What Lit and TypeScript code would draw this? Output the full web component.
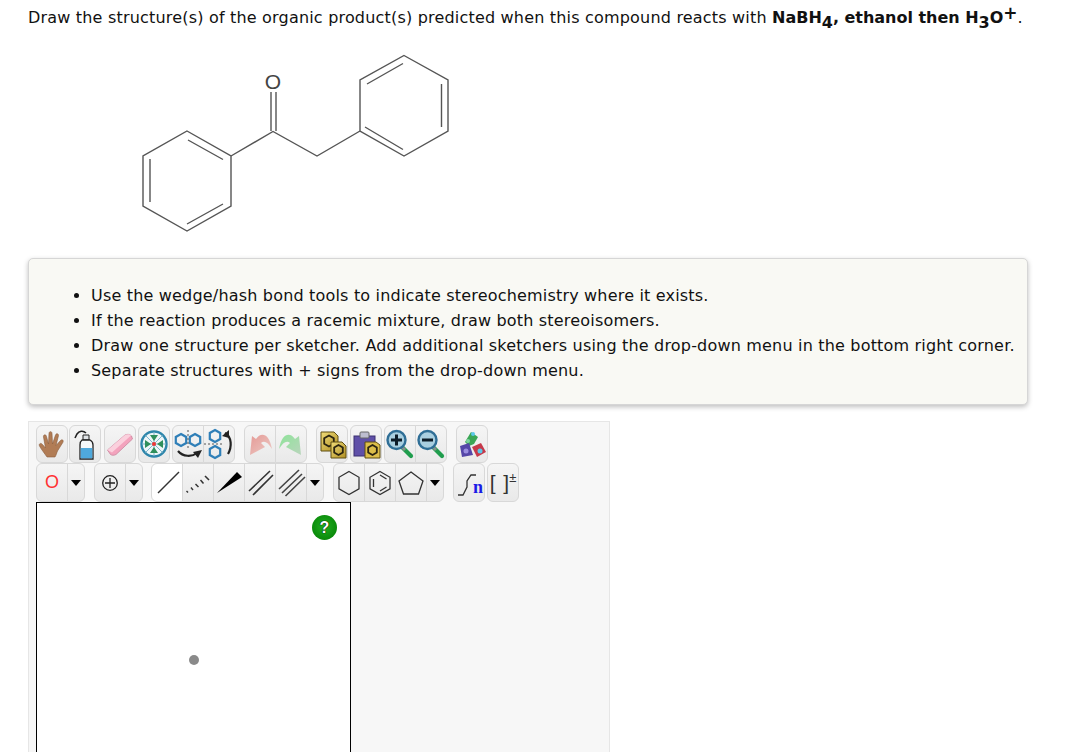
import { LitElement, html, css, svg } from "lit";
import { customElement } from "lit/decorators.js";

const hex = (cx: number, cy: number, r: number) => {
  const p: string[] = [];
  for (let i = 0; i < 6; i++) {
    const a = (Math.PI / 3) * i - Math.PI / 2;
    p.push(`${(cx + r * Math.cos(a)).toFixed(1)},${(cy + r * Math.sin(a)).toFixed(1)}`);
  }
  return p.join(" ");
};

const lens = (plus: boolean) => svg`<svg width="30" height="34" viewBox="0 0 30 34">
  <path d="M17 20 L26 29" stroke="#1f9d4d" stroke-width="4.200" stroke-linecap="round"/>
  <path d="M16.500 19.500 L20 23" stroke="#8a8f8f" stroke-width="3"/>
  <circle cx="11.500" cy="13" r="9" fill="#a9cfe0" stroke="#2f6e96" stroke-width="2.400"/>
  <path d="M6 13 H17 ${plus ? "M11.500 7.500 V18.500" : ""}" stroke="#0c1c28" stroke-width="3"/>
</svg>`;

const I = {
  hand: svg`<svg width="30" height="34" viewBox="0 0 30 34"><path d="M10 30 C8 27 4 22 2.500 19 C1.500 16.500 4 15.500 5.500 17.500 L8.500 21 L6.500 10 C6 7.500 9 7 9.500 9.500 L11.500 17 L12 6.500 C12 4 15 4 15 6.500 L15.500 17 L18.500 8 C19.300 5.800 22 6.600 21.400 9 L19 18.500 L23.500 13.500 C25.300 11.800 27 13.500 25.800 15.500 L20.500 24 C19.500 26.500 19 28.500 18 30 Z" fill="#b17c55" stroke="#8a5c3c" stroke-width=".6"/></svg>`,
  bottle: svg`<svg width="30" height="34" viewBox="0 0 30 34"><path d="M5 11 L7 7 C9 4 13 3 16 6" fill="none" stroke="#222" stroke-width="1.600"/><path d="M13 8 H19 V13 H13 Z" fill="#dfe3e6" stroke="#222"/><path d="M12 13 H20 C22 14 23 16 23 18 V32 H10 V18 C10 16 10.500 14 12 13 Z" fill="#f6f9fb" stroke="#222" stroke-width="1.300"/><path d="M10.700 21 H22.300 V31.300 H10.700 Z" fill="#4fa9dc"/></svg>`,
  eraser: svg`<svg width="30" height="34" viewBox="0 0 30 34"><path d="M2.500 23 L20 8 C22 7 25 7 26.500 9 L27.500 12 L11 27.500 C9 28.500 7 28.500 5.500 27.500 Z" fill="#f3a3bd" stroke="#c9859d" stroke-width=".8"/><path d="M2.500 23 L20 8 C22 7 25 7 26 8.500 L7 25.500 Z" fill="#fbd0dd"/></svg>`,
  clean: svg`<svg width="30" height="34" viewBox="0 0 30 34"><circle cx="15" cy="17" r="12.500" fill="#eef6f8" stroke="#2e86ab" stroke-width="2.400"/><g stroke="#7fb6cc" stroke-width="1"><path d="M15 5 V29 M3 17 H27 M6.500 8.500 L23.500 25.500 M23.500 8.500 L6.500 25.500"/></g><g fill="#2f8f5b"><path d="M15 14 L11 8 H19 Z M15 20 L11 26 H19 Z M12 17 L6 13 V21 Z M18 17 L24 13 V21 Z"/></g><circle cx="15" cy="17" r="2" fill="#e33"/></svg>`,
  flipH: svg`<svg width="30" height="34" viewBox="0 0 30 34"><g fill="none" stroke="#2f7fb8" stroke-width="2.200"><polygon points="${hex(8, 13, 6)}"/><polygon points="${hex(22, 13, 6)}"/></g><path d="M15 3 V22" stroke="#555" stroke-dasharray="2 2"/><path d="M5 24 C10 30 19 30 24 26" fill="none" stroke="#222" stroke-width="2.200"/><path d="M29 23 L25 31 L20 25 Z" fill="#222"/></svg>`,
  flipV: svg`<svg width="30" height="34" viewBox="0 0 30 34"><g fill="none" stroke="#2f7fb8" stroke-width="2.200"><polygon points="${hex(11, 9, 6)}"/><polygon points="${hex(11, 25, 6)}"/></g><path d="M0 17 H20" stroke="#555" stroke-dasharray="2 2"/><path d="M21 6 C28 10 28 20 24 27" fill="none" stroke="#222" stroke-width="2.200"/><path d="M18 9 L25 3 L25 11 Z" fill="#222"/></svg>`,
  undo: svg`<svg width="30" height="34" viewBox="0 0 30 34"><defs><linearGradient id="u" x1="0" y1="0" x2="1" y2="1"><stop offset="0" stop-color="#e59a96"/><stop offset="1" stop-color="#eccac5"/></linearGradient></defs><path d="M5 28 L7 9 L11 12 C16 5 24 6 27 22 C23 15 19 13 16 16 L20 20 Z" fill="url(#u)"/></svg>`,
  redo: svg`<svg width="30" height="34" viewBox="0 0 30 34"><defs><linearGradient id="r" x1="0" y1="0" x2="1" y2="1"><stop offset="0" stop-color="#8fe39a"/><stop offset="1" stop-color="#b9d5bc"/></linearGradient></defs><path d="M25 28 L23 9 L19 12 C14 5 6 6 3 22 C7 15 11 13 14 16 L10 20 Z" fill="url(#r)"/></svg>`,
  copy: svg`<svg width="30" height="34" viewBox="0 0 30 34"><defs><linearGradient id="g" x1="0" y1="0" x2="1" y2="1"><stop offset="0" stop-color="#f0dc78"/><stop offset="1" stop-color="#b08f24"/></linearGradient></defs><path d="M4 5 H17 L21 9 V24 H4 Z" fill="url(#g)" stroke="#5f4e12"/><polygon points="${hex(12, 14, 5.500)}" fill="none" stroke="#2b2410" stroke-width="1.800"/><path d="M14 15 H25 L29 19 V31 H14 Z" fill="url(#g)" stroke="#5f4e12"/><polygon points="${hex(21.500, 23, 5)}" fill="none" stroke="#2b2410" stroke-width="1.800"/></svg>`,
  paste: svg`<svg width="30" height="34" viewBox="0 0 30 34"><rect x="3" y="9" width="21" height="20" fill="#5f50a8" stroke="#3b2f70"/><rect x="9" y="5" width="9" height="6" rx="1" fill="#bdbdcf" stroke="#666"/><path d="M14 15 H25 L29 18 V31 H14 Z" fill="#dcbe4a" stroke="#5f4e12"/><polygon points="${hex(21.500, 23, 5)}" fill="none" stroke="#2b2410" stroke-width="1.800"/></svg>`,
  zoomIn: lens(true),
  zoomOut: lens(false),
  atoms: svg`<svg width="30" height="34" viewBox="0 0 30 34"><path d="M8 15 L14 5 L21 10 L17 17 L12 19 Z" fill="#3aa655"/><polygon points="3,19 12,16 16,28 5,30" fill="#5546a8"/><polygon points="15,20 24,16 29,25 20,30" fill="#c5394a"/><circle cx="16" cy="7" r="2" fill="#5bc8e8"/><circle cx="11" cy="14" r="2" fill="#7fd4a0"/><circle cx="23" cy="24" r="2.500" fill="#5bc8e8"/><circle cx="9" cy="24" r="2.500" fill="#9a8ee0"/></svg>`,
  caret: svg`<svg width="10" height="6" viewBox="0 0 10 6"><path d="M0 0 H10 L5 6 Z" fill="#000"/></svg>`,
  plus: svg`<svg width="18" height="18" viewBox="0 0 18 18"><circle cx="9" cy="9" r="7.300" fill="none" stroke="#222" stroke-width="1.300"/><path d="M4 9 H14 M9 4 V14" stroke="#222" stroke-width="1.300"/></svg>`,
  single: svg`<svg width="30" height="30" viewBox="0 0 30 30"><path d="M6 25 L27 4" stroke="#333" stroke-width="1.500"/></svg>`,
  hash: svg`<svg width="30" height="30" viewBox="0 0 30 30"><g stroke="#333"><path d="M3.500 23 L5 24.500" stroke-width="1.400"/><path d="M8 19.500 L10 22" stroke-width="1.400"/><path d="M12.500 16 L15.500 19" stroke-width="1.500"/><path d="M17.500 12 L20.500 15.500" stroke-width="1.500"/><path d="M22 8 L26 12" stroke-width="1.600"/></g></svg>`,
  wedge: svg`<svg width="30" height="30" viewBox="0 0 30 30"><polygon points="3,25 23,4 28,9" fill="#000"/></svg>`,
  dbl: svg`<svg width="30" height="30" viewBox="0 0 30 30"><path d="M4 23 L25 3 M8 27 L28 7" stroke="#333" stroke-width="1.600"/></svg>`,
  tri: svg`<svg width="30" height="30" viewBox="0 0 30 30"><path d="M3 21 L23 2 M6 25 L26 6 M9.500 28 L29 9" stroke="#444" stroke-width="1.600"/></svg>`,
  hexa: svg`<svg width="26" height="26" viewBox="0 0 26 26"><polygon points="${hex(13, 13, 11.500)}" fill="none" stroke="#333" stroke-width="1.300"/></svg>`,
  benz: svg`<svg width="26" height="26" viewBox="0 0 26 26"><polygon points="${hex(13, 13, 11.500)}" fill="none" stroke="#333" stroke-width="1.300"/><path d="M13 5 L19.500 9 M19.500 17 L13 21 M6.500 17 V9" stroke="#333" stroke-width="1.300" fill="none"/></svg>`,
  penta: svg`<svg width="26" height="26" viewBox="0 0 26 26"><polygon points="13,2 25,11 20.500,24 5.500,24 1,11" fill="none" stroke="#333" stroke-width="1.300"/></svg>`,
  sgroup: svg`<svg width="30" height="30" viewBox="0 0 30 30"><path d="M3 27 H8 L12 19 V13 L16 7 H21" fill="none" stroke="#333" stroke-width="1.300"/></svg>`,
};

const Molecule = svg`<svg class="mol" width="480" height="190" viewBox="28 52 480 190">
  <g fill="none" stroke="#555" stroke-width="1.400">
    <polygon points="404,55.500 448,80 448,131 404,156 360,131 360,80"/>
    <path d="M367 84 L403 63.500 M441.500 84 V127 M365 127 L403 149.500"/>
    <polygon points="187,131 231,156 231,206 187,231 143,206 143,156"/>
    <path d="M188 140 L223 159.500 M150 159 V202 M187 224 L223 204"/>
    <path d="M231 156 L273 131.500 L317 156 L360 131 M271 92 V131 M276 92 V131"/>
    <text x="273" y="89" fill="#444" stroke="none" font-family="Liberation Sans, sans-serif" font-size="21" text-anchor="middle">O</text>
  </g>
</svg>`;

@customElement("app-root")
export class AppRoot extends LitElement {
  static styles = css`
    :host { display: block; font-family: "DejaVu Sans", Verdana, sans-serif; color: #111; height: 752px; overflow: hidden; background: #fff; }
    .page { padding: 9px 39px 0 28px; }
    .q { margin: 0; font-size: 16px; letter-spacing: .19px; line-height: 18px; white-space: nowrap; }
    .q b { font-weight: 700; letter-spacing: -.02px; }
    .q sub { font-size: 16px; line-height: 0; vertical-align: -5px; }
    .q sup { font-size: 17px; line-height: 0; vertical-align: 4px; }
    .mol { display: block; margin: 25px 0 0 0; }
    .note { box-sizing: border-box; margin-top: 16px; width: 1000px; height: 147px; background: #f9f9f4; border: 1px solid #d6d6d6; border-radius: 5px; box-shadow: 0 2px 5px rgba(0,0,0,.25); padding: 24px 0 0 0; font-size: 16px; letter-spacing: .185px; }
    .note ul { margin: 0; padding: 0 0 0 62px; }
    .note li { height: 25px; line-height: 25px; white-space: nowrap; }
    .panel { box-sizing: border-box; margin-top: 16px; width: 582px; height: 340px; background: #f7f7f7; border: 1px solid #e6e6e6; padding: 3px 0 0 7px; }
    .row { display: flex; height: 38px; }
    .row + .row { height: 39px; }
    .btn { box-sizing: border-box; flex: none; width: 32px; display: flex; align-items: center; justify-content: center; background: linear-gradient(#f5f5f5, #e9e9e9); border: 1px solid #d8d8d8; border-radius: 6px; overflow: hidden; }
    .row:first-child .btn svg { filter: blur(.35px); }
    .grp { display: flex; flex: none; }
    .grp .btn { border-radius: 0; margin-left: -1px; }
    .grp .btn:first-child { border-radius: 6px 0 0 6px; margin-left: 0; }
    .grp .btn:last-child { border-radius: 0 6px 6px 0; }
    .btn.sel { background: #fff; }
    .btn.car { width: 18px; }
    .o { color: #f33; font: 18px "Liberation Sans", sans-serif; }
    .n { color: #1a1ae6; font: bold 18px "Liberation Serif", serif; margin: 10px 0 0 -12px; }
    .br { font: 21px "Liberation Sans", sans-serif; color: #333; letter-spacing: 1px; }
    .pm { font: 13px "Liberation Sans", sans-serif; color: #333; margin: -10px 0 0 -1px; }
    .m1 { margin-left: 1px; } .m2 { margin-left: 2px; } .m3 { margin-left: 3px; } .m8 { margin-left: 8px; } .m9 { margin-left: 9px; }
    .canvas { position: relative; box-sizing: border-box; width: 315px; height: 260px; background: #fff; border: 1px solid #000; border-bottom: none; }
    .dot { position: absolute; left: 152px; top: 152px; width: 10px; height: 10px; border-radius: 50%; background: #8a8a8a; }
    .help { position: absolute; left: 275px; top: 12px; width: 25px; height: 25px; border-radius: 50%; background: radial-gradient(circle at 50% 45%, #22b022, #007a00); color: #fff; font: bold 16px/25px "Liberation Sans", sans-serif; text-align: center; text-shadow: 0 0 1px #000, 0 0 1px #000; }
  `;

  render() {
    return html`<div class="page">
      <p class="q">Draw the structure(s) of the organic product(s) predicted when this compound reacts with <b>NaBH<sub>4</sub>, ethanol then H<sub>3</sub>O<sup>+</sup></b>.</p>
      ${Molecule}
      <div class="note"><ul>
        <li>Use the wedge/hash bond tools to indicate stereochemistry where it exists.</li>
        <li>If the reaction produces a racemic mixture, draw both stereoisomers.</li>
        <li>Draw one structure per sketcher. Add additional sketchers using the drop-down menu in the bottom right corner.</li>
        <li>Separate structures with + signs from the drop-down menu.</li>
      </ul></div>
      <div class="panel">
        <div class="row">
          <div class="btn">${I.hand}</div>
          <div class="btn m1">${I.bottle}</div>
          <div class="btn m3">${I.eraser}</div>
          <div class="btn m2">${I.clean}</div>
          <div class="grp m2"><div class="btn">${I.flipH}</div><div class="btn">${I.flipV}</div></div>
          <div class="grp m9"><div class="btn">${I.undo}</div><div class="btn">${I.redo}</div></div>
          <div class="btn m9">${I.copy}</div>
          <div class="btn m2">${I.paste}</div>
          <div class="grp m2"><div class="btn">${I.zoomIn}</div><div class="btn">${I.zoomOut}</div></div>
          <div class="btn m9">${I.atoms}</div>
        </div>
        <div class="row">
          <div class="grp"><div class="btn"><span class="o">O</span></div><div class="btn car">${I.caret}</div></div>
          <div class="grp m9"><div class="btn">${I.plus}</div><div class="btn car">${I.caret}</div></div>
          <div class="grp m8">
            <div class="btn sel">${I.single}</div><div class="btn">${I.hash}</div><div class="btn">${I.wedge}</div><div class="btn">${I.dbl}</div><div class="btn">${I.tri}</div><div class="btn car">${I.caret}</div>
          </div>
          <div class="grp m9">
            <div class="btn">${I.hexa}</div><div class="btn">${I.benz}</div><div class="btn">${I.penta}</div><div class="btn car">${I.caret}</div>
          </div>
          <div class="btn m9">${I.sgroup}<span class="n">n</span></div>
          <div class="btn m2"><span class="br">[ ]</span><span class="pm">±</span></div>
        </div>
        <div class="canvas"><div class="dot"></div><div class="help">?</div></div>
      </div>
    </div>`;
  }
}
